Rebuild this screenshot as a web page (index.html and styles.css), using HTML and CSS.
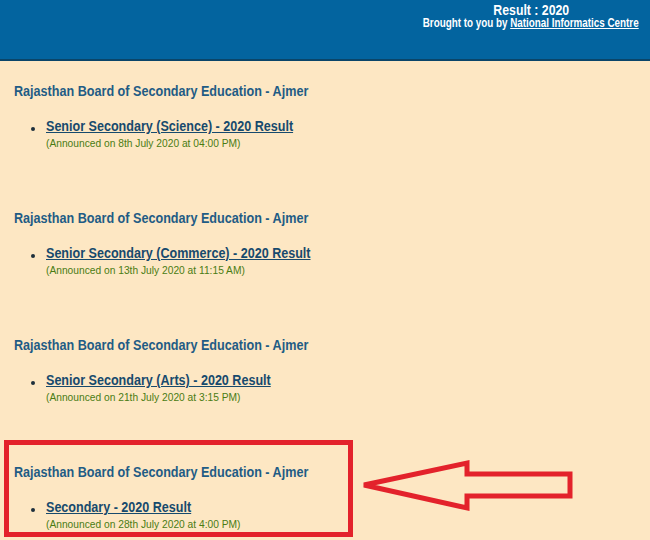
FILE: index.html
```html
<!DOCTYPE html>
<html>
<head>
<meta charset="utf-8">
<link rel="stylesheet" href="styles.css">
</head>
<body>
<header class="top">
  <div class="top-title">
    <div class="result">Result : 2020</div>
    <div class="brought">Brought to you by <a href="#">National Informatics Centre</a></div>
  </div>
</header>
<main class="list">
  <section class="group">
    <h2 class="board"><span>Rajasthan Board of Secondary Education - Ajmer</span></h2>
    <div class="item"><span class="dot"></span><a href="#">Senior Secondary (Science) - 2020 Result</a></div>
    <div class="note"><span>(Announced on 8th July 2020 at 04:00 PM)</span></div>
  </section>
  <section class="group">
    <h2 class="board"><span>Rajasthan Board of Secondary Education - Ajmer</span></h2>
    <div class="item"><span class="dot"></span><a href="#">Senior Secondary (Commerce) - 2020 Result</a></div>
    <div class="note"><span>(Announced on 13th July 2020 at 11:15 AM)</span></div>
  </section>
  <section class="group">
    <h2 class="board"><span>Rajasthan Board of Secondary Education - Ajmer</span></h2>
    <div class="item"><span class="dot"></span><a href="#">Senior Secondary (Arts) - 2020 Result</a></div>
    <div class="note"><span>(Announced on 21th July 2020 at 3:15 PM)</span></div>
  </section>
  <section class="group last">
    <h2 class="board"><span>Rajasthan Board of Secondary Education - Ajmer</span></h2>
    <div class="item"><span class="dot"></span><a href="#">Secondary - 2020 Result</a></div>
    <div class="note"><span>(Announced on 28th July 2020 at 4:00 PM)</span></div>
  </section>
</main>
<div class="highlight"></div>
<svg class="arrow" width="650" height="540" viewBox="0 0 650 540">
  <polygon points="364,485 467,463 467,474 570,474 570,496 467,496 467,508" fill="none" stroke="#e3222b" stroke-width="5" stroke-linejoin="miter"/>
</svg>
</body>
</html>
```
FILE: styles.css
```css
html, body {
  margin: 0;
  padding: 0;
}
body {
  width: 650px;
  height: 540px;
  overflow: hidden;
  background: #fde7c3;
  font-family: "Liberation Sans", Arial, sans-serif;
  position: relative;
}
.top {
  height: 59px;
  background: #03649f;
  border-bottom: 2px solid #0a4569;
  display: flex;
  justify-content: flex-end;
}
.top-title {
  width: 238px;
  padding-top: 2.3px;
  display: flex;
  flex-direction: column;
  align-items: center;
  color: #ffffff;
  font-weight: bold;
}
.result {
  font-size: 15px;
  line-height: 15px;
  white-space: nowrap;
  transform: scaleX(0.82);
}
.brought {
  font-size: 12px;
  line-height: 14px;
  margin-top: -1px;
  white-space: nowrap;
  transform: scaleX(0.82);
}
.brought a {
  color: #ffffff;
  text-decoration: underline;
}
.list {
  padding: 22px 0 0 14px;
}
.group {
  height: 127px;
}
.group.last {
  height: auto;
}
.board {
  margin: 0;
  font-size: 14px;
  line-height: 16px;
  font-weight: bold;
  color: #1f5c85;
  white-space: nowrap;
}
.board span,
.note span,
.item a {
  display: inline-block;
  transform-origin: left center;
}
.board span {
  transform: scaleX(0.9);
}
.item {
  display: flex;
  align-items: baseline;
  margin-top: 19px;
  padding-left: 17px;
  font-size: 14px;
  line-height: 16px;
  font-weight: bold;
  white-space: nowrap;
}
.item a {
  color: #174a6d;
  text-decoration: underline;
  transform: scaleX(0.897);
}
.dot {
  display: inline-block;
  width: 4px;
  height: 4px;
  border-radius: 50%;
  background: #1d2f3c;
  margin-right: 11px;
  margin-bottom: 3px;
}
.note {
  margin-top: 3px;
  margin-left: 32px;
  font-size: 11px;
  line-height: 13px;
  color: #4a7c13;
  white-space: nowrap;
}
.note span {
  transform: scaleX(0.93);
}
.highlight {
  position: absolute;
  left: 4px;
  top: 440px;
  width: 339px;
  height: 87px;
  border: 5px solid #e3222b;
}
.arrow {
  position: absolute;
  left: 0;
  top: 0;
}
```
